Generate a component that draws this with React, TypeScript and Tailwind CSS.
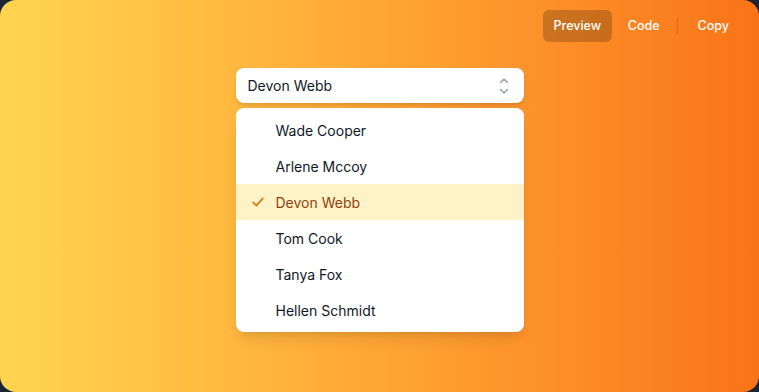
import React from "react";

const people = ["Wade Cooper", "Arlene Mccoy", "Devon Webb", "Tom Cook", "Tanya Fox", "Hellen Schmidt"];

export default function App() {
  return (
    <div className="w-[759px] h-[392px] bg-[#1c2436]" style={{ fontFamily: "Inter, 'Noto Sans', sans-serif" }}>
      <div className="w-full h-full rounded-2xl bg-gradient-to-r from-[#ffd54f] to-[#f97316] flex flex-col">
        <div className="flex justify-end items-center pt-[10px] pr-[30px]">
          <button className="h-8 w-[69px] rounded-md bg-black/20 text-white text-[12.5px] font-medium">Preview</button>
          <button className="h-8 pl-4 pr-[17px] text-white text-[12.5px] font-medium">Code</button>
          <div className="w-px h-4 bg-black/15"></div>
          <button className="h-8 pl-5 text-white text-[12.5px] font-medium">Copy</button>
        </div>
        <div className="flex justify-center pt-[26px]">
          <div className="w-[288px] flex flex-col gap-[5px]">
            <div className="h-[35px] rounded-lg bg-white shadow-md flex items-center justify-between pl-3 pr-[10px]">
              <span className="text-[14px] text-gray-900">Devon Webb</span>
              <svg width="20" height="20" viewBox="0 0 20 20" fill="none" stroke="#9ca3af" strokeWidth="1.5" strokeLinecap="round" strokeLinejoin="round">
                <path d="M6.5 6.5 10 3l3.5 3.5" />
                <path d="M6.5 13.5 10 17l3.5-3.5" />
              </svg>
            </div>
            <div className="rounded-lg bg-white shadow-lg py-1">
              {people.map((p) => {
                const sel = p === "Devon Webb";
                return (
                  <div key={p} className={`h-9 flex items-center relative pl-10 text-[14px] ${sel ? "bg-[#fef3c7] text-[#92400e]" : "text-gray-900"}`}>
                    {sel && (
                      <svg className="absolute left-[14px]" width="16" height="16" viewBox="0 0 20 20" fill="none" stroke="#d97706" strokeWidth="2" strokeLinecap="round" strokeLinejoin="round">
                        <path d="M4 10.5 8 14.5 16 5.5" />
                      </svg>
                    )}
                    {p}
                  </div>
                );
              })}
            </div>
          </div>
        </div>
      </div>
    </div>
  );
}
